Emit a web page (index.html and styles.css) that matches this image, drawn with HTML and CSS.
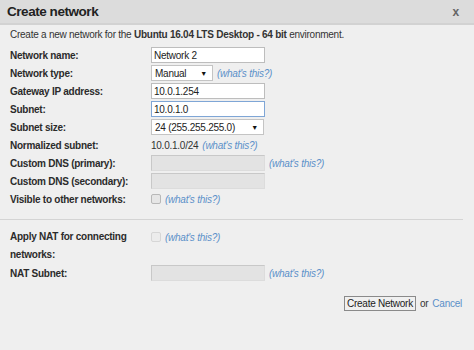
FILE: index.html
```html
<!DOCTYPE html>
<html lang="en">
<head>
  <meta charset="UTF-8" />
  <title>Create network</title>
  <link rel="stylesheet" href="styles.css">
</head>
<body>
  <div class="dialog">
    <div class="dialog-header">
      <h2>Create network</h2>
      <span class="close">x</span>
    </div>

    <div class="dialog-body">
      <p class="intro">Create a new network for the <b>Ubuntu 16.04 LTS Desktop - 64 bit</b> environment.</p>

      <div class="form-grid">
        <label>Network name:</label>
        <div class="field"><input type="text" class="text-input" value="Network 2" /></div>

        <label>Network type:</label>
        <div class="field">
          <span class="select select-small">Manual <i>&#9660;</i></span>
          <a href="#" class="help">(what's this?)</a>
        </div>

        <label>Gateway IP address:</label>
        <div class="field"><input type="text" class="text-input" value="10.0.1.254" /></div>

        <label>Subnet:</label>
        <div class="field"><input type="text" class="text-input focused" value="10.0.1.0" /></div>

        <label>Subnet size:</label>
        <div class="field"><span class="select select-wide">24 (255.255.255.0) <i>&#9660;</i></span></div>

        <label>Normalized subnet:</label>
        <div class="field"><span class="value">10.0.1.0/24</span> <a href="#" class="help">(what's this?)</a></div>

        <label>Custom DNS (primary):</label>
        <div class="field"><input type="text" class="text-input" disabled /> <a href="#" class="help">(what's this?)</a></div>

        <label>Custom DNS (secondary):</label>
        <div class="field"><input type="text" class="text-input" disabled /></div>

        <label>Visible to other networks:</label>
        <div class="field"><span class="checkbox"></span> <a href="#" class="help">(what's this?)</a></div>
      </div>

      <hr class="divider" />

      <div class="form-grid">
        <label class="tall">Apply NAT for connecting networks:</label>
        <div class="field"><span class="checkbox faded"></span> <a href="#" class="help">(what's this?)</a></div>
        <div class="field"></div>

        <label>NAT Subnet:</label>
        <div class="field"><input type="text" class="text-input" disabled /> <a href="#" class="help">(what's this?)</a></div>
      </div>

      <div class="actions">
        <button>Create Network</button> or <a href="#" class="cancel">Cancel</a>
      </div>
    </div>
  </div>
</body>
</html>
```

FILE: styles.css
```css
body {
  margin: 0;
  background-color: #efefef;
  font-family: "Liberation Sans", Arial, sans-serif;
  font-size: 10px;
  letter-spacing: -0.25px;
  color: #333;
}

.dialog {
  width: 474px;
  height: 350px;
  background-color: #efefef;
}

.dialog-header {
  display: flex;
  justify-content: space-between;
  align-items: center;
  height: 23px;
  padding: 0 15px 0 7px;
  background-color: #dcdcdc;
  border-bottom: 2px solid #d2d2d2;
}

.dialog-header h2 {
  margin: 0;
  font-size: 13.5px;
  letter-spacing: -0.45px;
  font-weight: bold;
  color: #222;
}

.close {
  font-size: 12px;
  font-weight: bold;
  color: #666;
}

.dialog-body {
  padding: 2px 10px 0 10px;
}

.intro {
  margin: 0 0 3px 0;
  line-height: 16px;
}

.form-grid {
  display: grid;
  grid-template-columns: 141px 1fr;
  grid-auto-rows: 18px;
  align-items: center;
}

.form-grid label {
  font-weight: bold;
  color: #2b2b2b;
}

.form-grid label.tall {
  grid-row: span 2;
  align-self: start;
  line-height: 18px;
}

.field {
  display: flex;
  align-items: center;
  gap: 4px;
}

.text-input {
  box-sizing: border-box;
  width: 114px;
  height: 16px;
  padding: 0 2px;
  margin: 0;
  border: 1px solid #bdbdbd;
  background-color: #fff;
  font-family: "Liberation Sans", Arial, sans-serif;
  font-size: 10px;
  letter-spacing: -0.25px;
  color: #222;
}

.text-input.focused {
  border-color: #7fa6d6;
}

.text-input:disabled {
  background-color: #e3e3e3;
  border-color: #c8c8c8 #dcdcdc #dcdcdc #c8c8c8;
}

.select {
  box-sizing: border-box;
  display: inline-flex;
  justify-content: space-between;
  align-items: center;
  height: 16px;
  padding: 0 5px 0 3px;
  border: 1px solid #c4c4c4;
  background-color: #fff;
  color: #222;
}

.select i {
  font-style: normal;
  font-size: 7px;
  color: #111;
}

.select-small {
  width: 62px;
}

.select-wide {
  width: 113px;
}

.value {
  color: #333;
}

.help {
  font-style: italic;
  color: #5b8fc9;
  text-decoration: none;
}

.checkbox {
  box-sizing: border-box;
  display: inline-block;
  width: 10px;
  height: 10px;
  border: 1px solid #b8b8b8;
  border-radius: 2px;
  background-color: #e6e6e6;
}

.checkbox.faded {
  border-color: #d6d6d6;
  background-color: #ececec;
}

.divider {
  margin: 11px 1px 8px -10px;
  border: none;
  border-top: 1px solid #d4d4d4;
}

.actions {
  display: flex;
  justify-content: flex-end;
  align-items: center;
  gap: 4px;
  margin-top: 14px;
  padding-right: 2px;
}

.actions button {
  height: 15px;
  padding: 0 2px;
  border: 1px solid #8a8a8a;
  background-color: #f0f0f0;
  font-family: "Liberation Sans", Arial, sans-serif;
  font-size: 10px;
  letter-spacing: -0.25px;
  color: #222;
}

.cancel {
  color: #5b8fc9;
  text-decoration: none;
}
```
